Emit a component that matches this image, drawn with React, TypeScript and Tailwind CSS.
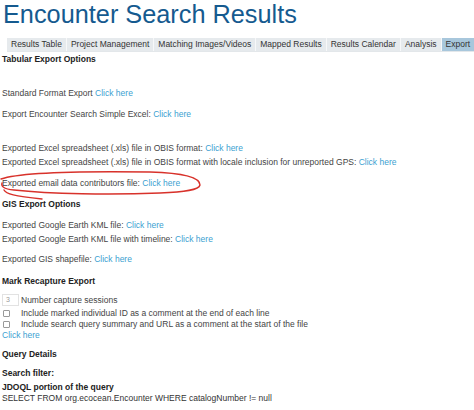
const tabs = [
  'Results Table',
  'Project Management',
  'Matching Images/Videos',
  'Mapped Results',
  'Results Calendar',
  'Analysis',
  'Export',
];

function Link() {
  return <a className="text-[#3b9fd1] cursor-pointer">Click here</a>;
}

function Line({ className = '', children }: { className?: string; children: React.ReactNode }) {
  return <div className={`leading-[14px] h-[14px] whitespace-nowrap ${className}`}>{children}</div>;
}

function Heading({ className = '', children }: { className?: string; children: React.ReactNode }) {
  return <div className={`leading-[14px] h-[14px] font-bold text-[#222] whitespace-nowrap ${className}`}>{children}</div>;
}

export default function App() {
  return (
    <div
      className="relative w-[474px] h-[410px] overflow-hidden bg-white text-[#444] text-[8.5px]"
      style={{ fontFamily: '"Liberation Sans", Arial, sans-serif' }}
    >
      <h1 className="pl-[3px] text-[25.3px] leading-[29px] text-[#155a8f] whitespace-nowrap">
        Encounter Search Results
      </h1>

      <div className="mt-[9px] ml-[7px] flex border-b border-[#e3e7ea]">
        {tabs.map((t, i) => (
          <div
            key={t}
            className={`h-[13px] leading-[13px] px-[4px] text-[#333] whitespace-nowrap ${
              i > 0 ? 'border-l border-[#f7f8f9]' : ''
            } ${t === 'Export' ? 'bg-[#a8c7dc]' : 'bg-[#e6eaed]'}`}
          >
            {t}
          </div>
        ))}
      </div>

      <div className="pl-[2px]">
        <Heading>Tabular Export Options</Heading>
        <Line className="mt-[20px]">
          Standard Format Export <Link />
        </Line>
        <Line className="mt-[7px]">
          Export Encounter Search Simple Excel: <Link />
        </Line>
        <Line className="mt-[20px]">
          Exported Excel spreadsheet (.xls) file in OBIS format: <Link />
        </Line>
        <Line>
          Exported Excel spreadsheet (.xls) file in OBIS format with locale inclusion for unreported GPS: <Link />
        </Line>
        <Line className="mt-[7px]">
          Exported email data contributors file: <Link />
        </Line>

        <Heading className="mt-[7px]">GIS Export Options</Heading>
        <Line className="mt-[7px]">
          Exported Google Earth KML file: <Link />
        </Line>
        <Line>
          Exported Google Earth KML file with timeline: <Link />
        </Line>
        <Line className="mt-[6px]">
          Exported GIS shapefile: <Link />
        </Line>

        <Heading className="mt-[8px]">Mark Recapture Export</Heading>
        <div className="mt-[5px] h-[14px] flex items-center whitespace-nowrap">
          <div className="w-[17px] h-[12px] border border-[#e2e2e2] text-[7px] leading-[10px] text-[#999] pl-[3px]">
            3
          </div>
          <span className="ml-[2px]">Number capture sessions</span>
        </div>
        <div className="mt-[1px] h-[11px] flex items-center whitespace-nowrap">
          <span className="ml-[1px] w-[7px] h-[7px] border border-[#999] rounded-[1px] bg-white" />
          <span className="ml-[11px] leading-[11px]">Include marked individual ID as a comment at the end of each line</span>
        </div>
        <div className="h-[11px] flex items-center whitespace-nowrap">
          <span className="ml-[1px] w-[7px] h-[7px] border border-[#999] rounded-[1px] bg-white" />
          <span className="ml-[11px] leading-[11px]">
            Include search query summary and URL as a comment at the start of the file
          </span>
        </div>
        <div className="h-[11px] leading-[11px]">
          <Link />
        </div>

        <Heading className="mt-[6px]">Query Details</Heading>
        <Heading className="mt-[5px]">Search filter:</Heading>
        <div className="mt-[2px] h-[11px] leading-[11px] font-bold text-[#222]">JDOQL portion of the query</div>
        <div className="h-[11px] leading-[11px] text-[#333] whitespace-nowrap">
          SELECT FROM org.ecocean.Encounter WHERE catalogNumber != null
        </div>
      </div>

      <svg
        className="absolute top-0 left-0 pointer-events-none"
        width="474"
        height="410"
        viewBox="0 0 474 410"
        fill="none"
      >
        <path
          d="M1 179 C 18 173, 80 171, 150 172 C 185 173, 200 178, 200 185 C 199 190, 185 192, 160 193 C 110 195, 50 194, 14 190 C 3 189, 1 186, 2 183 M 4 190 C 6 194, 14 196, 42 199"
          stroke="#d8322b"
          strokeWidth="1.4"
          strokeLinecap="round"
          strokeLinejoin="round"
        />
      </svg>
    </div>
  );
}
